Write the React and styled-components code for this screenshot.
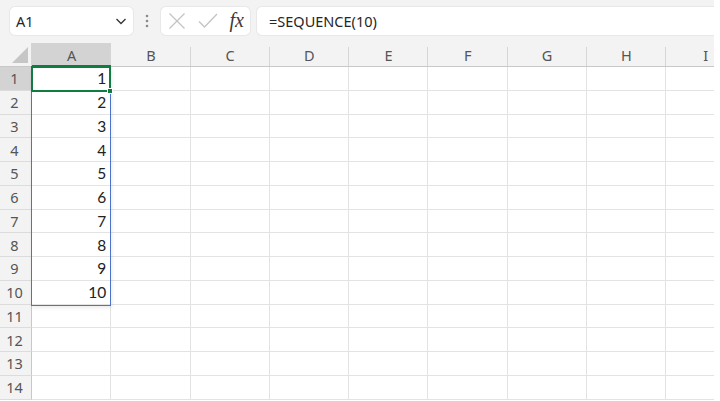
import React from "react";
import styled, { createGlobalStyle } from "styled-components";

const COL_W = 79.25;
const ROW_H = 23.75;
const HEAD_W = 32;
const HEAD_H = 24;
const columns = ["A", "B", "C", "D", "E", "F", "G", "H", "I"];
const rows = Array.from({ length: 14 }, (_, i) => i + 1);
const values = { 1: 1, 2: 2, 3: 3, 4: 4, 5: 5, 6: 6, 7: 7, 8: 8, 9: 9, 10: 10 };

const GlobalStyle = createGlobalStyle`
  html, body {
    margin: 0;
    padding: 0;
    background: #ffffff;
  }
`;

const Page = styled.div`
  width: 714px;
  height: 401px;
  overflow: hidden;
  font-family: "Noto Sans", "Open Sans", sans-serif;
  background: #ffffff;
`;

const Toolbar = styled.div`
  height: 43px;
  background: #f3f3f3;
  display: flex;
  align-items: flex-start;
  padding: 7px 0 0 10px;
  box-sizing: border-box;
`;

const Box = styled.div`
  height: 28px;
  background: #ffffff;
  border-radius: 5px;
  box-shadow: 0 0 0 1px #e8e8e8;
  display: flex;
  align-items: center;
  box-sizing: border-box;
`;

const NameBox = styled(Box)`
  width: 123px;
  padding: 0 5px 0 6px;
  justify-content: space-between;
  font-size: 14.5px;
  color: #262626;
`;

const Dots = styled.div`
  width: 28px;
  display: flex;
  justify-content: center;
  padding-top: 7px;
`;

const IconBox = styled(Box)`
  width: 89px;
  padding: 0 6px 0 7px;
  justify-content: space-between;
`;

const Fx = styled.span`
  font-family: "Liberation Serif", "DejaVu Serif", serif;
  font-style: italic;
  font-size: 20px;
  color: #3a3a3a;
  line-height: 1;
  margin-top: -3px;
`;

const FormulaBar = styled(Box)`
  flex: 1;
  margin-left: 7px;
  border-radius: 5px 0 0 5px;
  padding-left: 12px;
  font-size: 14.5px;
  color: #262626;
`;

const Sheet = styled.div`
  position: relative;
  display: grid;
  grid-template-columns: ${HEAD_W}px repeat(${columns.length}, ${COL_W}px);
  grid-template-rows: ${HEAD_H}px repeat(${rows.length}, ${ROW_H}px);
`;

const Corner = styled.div`
  background: #f3f3f3;
  border-right: 1px solid #d4d4d4;
  border-bottom: 1px solid #c8c8c8;
  position: relative;
  &::after {
    content: "";
    position: absolute;
    right: 3px;
    bottom: 3px;
    width: 0;
    height: 0;
    border-left: 16px solid transparent;
    border-bottom: 16px solid #c6c6c6;
  }
`;

const ColHead = styled.div`
  background: ${(p) => (p.$active ? "#d3d3d3" : "#f3f3f3")};
  border-bottom: ${(p) => (p.$active ? "2px solid #107c41" : "1px solid #c8c8c8")};
  display: flex;
  align-items: center;
  justify-content: center;
  font-size: 14.5px;
  color: #555555;
  position: relative;
  box-sizing: border-box;
  padding-top: 1px;
  &::after {
    content: "";
    position: absolute;
    right: 0;
    top: 4px;
    bottom: 0;
    width: 1px;
    background: #d6d6d6;
  }
`;

const RowHead = styled.div`
  background: ${(p) => (p.$active ? "#d3d3d3" : "#f3f3f3")};
  border-right: 1px solid #c8c8c8;
  border-bottom: 1px solid #dcdcdc;
  display: flex;
  align-items: center;
  justify-content: center;
  font-size: 14.5px;
  color: #555555;
  box-sizing: border-box;
  padding-right: 2px;
`;

const Cell = styled.div`
  border-right: 1px solid #e3e3e3;
  border-bottom: 1px solid #e3e3e3;
  box-sizing: border-box;
  display: flex;
  align-items: center;
  justify-content: flex-end;
  padding-right: 4px;
  font-family: "Lato", "Liberation Sans", sans-serif;
  font-size: 15.5px;
  color: #222222;
`;

const Spill = styled.div`
  position: absolute;
  left: ${HEAD_W - 1}px;
  top: ${HEAD_H}px;
  width: ${COL_W + 1}px;
  height: ${ROW_H * 10 + 1}px;
  border: 1px solid #4a73c9;
  box-sizing: border-box;
  box-shadow: 1px 2px 4px rgba(0, 0, 0, 0.08);
  pointer-events: none;
`;

const Active = styled.div`
  position: absolute;
  left: ${HEAD_W - 1}px;
  top: ${HEAD_H - 1}px;
  width: ${COL_W + 1}px;
  height: ${ROW_H + 2}px;
  border: 2px solid #107c41;
  box-sizing: border-box;
  pointer-events: none;
`;

const Handle = styled.div`
  position: absolute;
  left: ${HEAD_W + COL_W - 4}px;
  top: ${HEAD_H + ROW_H - 3}px;
  width: 6px;
  height: 6px;
  background: #107c41;
  border: 1px solid #ffffff;
  box-sizing: border-box;
`;

function Chevron() {
  return (
    <svg width="14" height="14" viewBox="0 0 14 14">
      <path d="M2.5 5 L7 9.5 L11.5 5" fill="none" stroke="#333" strokeWidth="1.3" />
    </svg>
  );
}

function VDots() {
  return (
    <svg width="4" height="14" viewBox="0 0 4 14">
      <circle cx="2" cy="2" r="1.3" fill="#8a8a8a" />
      <circle cx="2" cy="7" r="1.3" fill="#8a8a8a" />
      <circle cx="2" cy="12" r="1.3" fill="#8a8a8a" />
    </svg>
  );
}

function Cross() {
  return (
    <svg width="18" height="18" viewBox="0 0 18 18">
      <path d="M1.5 1.5 L16.5 16.5 M16.5 1.5 L1.5 16.5" stroke="#c4c4c4" strokeWidth="1.3" />
    </svg>
  );
}

function Check() {
  return (
    <svg width="20" height="18" viewBox="0 0 20 18">
      <path d="M1 9.5 L6.5 15 L19 2" fill="none" stroke="#c4c4c4" strokeWidth="1.3" />
    </svg>
  );
}

export default function App() {
  return (
    <Page>
      <GlobalStyle />
      <Toolbar>
        <NameBox>
          <span>A1</span>
          <Chevron />
        </NameBox>
        <Dots>
          <VDots />
        </Dots>
        <IconBox>
          <Cross />
          <Check />
          <Fx>fx</Fx>
        </IconBox>
        <FormulaBar>=SEQUENCE(10)</FormulaBar>
      </Toolbar>
      <Sheet>
        <Corner />
        {columns.map((c) => (
          <ColHead key={c} $active={c === "A"}>
            {c}
          </ColHead>
        ))}
        {rows.map((r) => (
          <React.Fragment key={r}>
            <RowHead $active={r === 1}>{r}</RowHead>
            {columns.map((c) => (
              <Cell key={c}>{c === "A" ? values[r] : ""}</Cell>
            ))}
          </React.Fragment>
        ))}
        <Spill />
        <Active />
        <Handle />
      </Sheet>
    </Page>
  );
}
